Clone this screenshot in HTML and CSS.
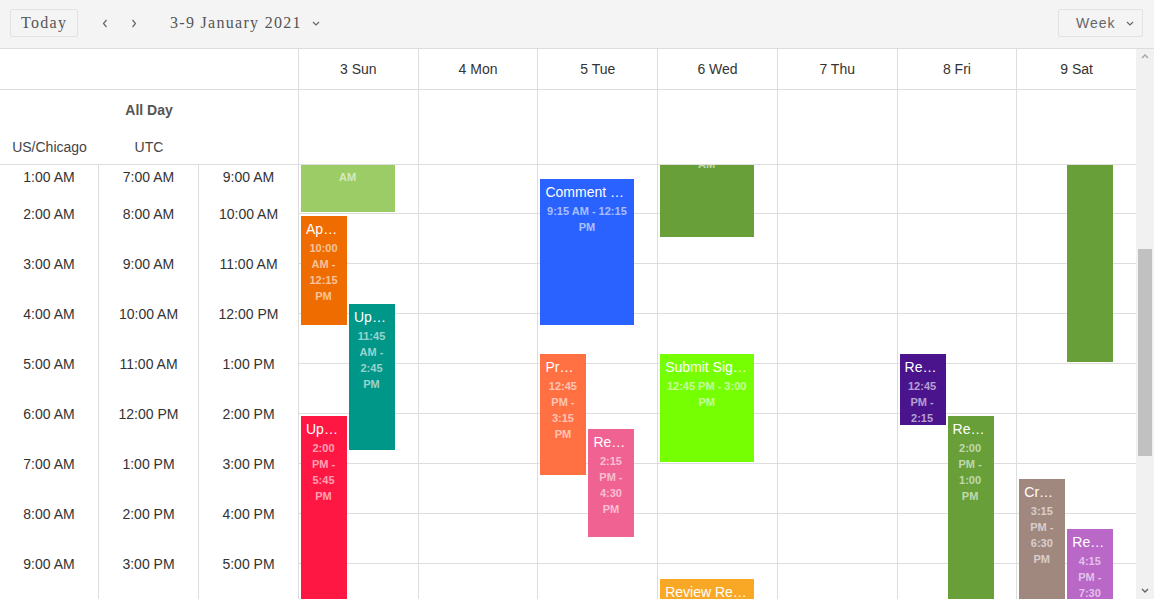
FILE: index.html
```html
<!DOCTYPE html>
<html lang="en">
<head>
  <meta charset="UTF-8" />
  <title>Scheduler - Week</title>
  <link rel="stylesheet" href="styles.css">
</head>
<body>
  <div class="toolbar">
    <button class="btn today">Today</button>
    <button class="nav prev"><svg width="6" height="9" viewBox="0 0 6 9"><polyline points="4.5,1 1.5,4.5 4.5,8" /></svg></button>
    <button class="nav next"><svg width="6" height="9" viewBox="0 0 6 9"><polyline points="1.5,1 4.5,4.5 1.5,8" /></svg></button>
    <div class="range">3-9 January 2021 <svg width="8" height="5" viewBox="0 0 8 5"><polyline points="1,1 4,4 7,1" /></svg></div>
    <div class="spacer"></div>
    <button class="btn view">Week <svg width="8" height="5" viewBox="0 0 8 5"><polyline points="1,1 4,4 7,1" /></svg></button>
  </div>

  <div class="main">
    <div class="calendar">
      <div class="row head">
        <div class="corner"></div>
        <div class="day">3 Sun</div>
        <div class="day">4 Mon</div>
        <div class="day">5 Tue</div>
        <div class="day">6 Wed</div>
        <div class="day">7 Thu</div>
        <div class="day">8 Fri</div>
        <div class="day">9 Sat</div>
      </div>

      <div class="row allday">
        <div class="corner">
          <div class="allday-label">All Day</div>
          <div class="zones">
            <div>US/Chicago</div>
            <div>UTC</div>
            <div></div>
          </div>
        </div>
        <div class="day"></div>
        <div class="day"></div>
        <div class="day"></div>
        <div class="day"></div>
        <div class="day"></div>
        <div class="day"></div>
        <div class="day"></div>
      </div>

      <div class="row body">
        <div class="gutter">
          <div class="tz">
            <div>1:00 AM</div><div>2:00 AM</div><div>3:00 AM</div><div>4:00 AM</div><div>5:00 AM</div>
            <div>6:00 AM</div><div>7:00 AM</div><div>8:00 AM</div><div>9:00 AM</div>
          </div>
          <div class="tz">
            <div>7:00 AM</div><div>8:00 AM</div><div>9:00 AM</div><div>10:00 AM</div><div>11:00 AM</div>
            <div>12:00 PM</div><div>1:00 PM</div><div>2:00 PM</div><div>3:00 PM</div>
          </div>
          <div class="tz">
            <div>9:00 AM</div><div>10:00 AM</div><div>11:00 AM</div><div>12:00 PM</div><div>1:00 PM</div>
            <div>2:00 PM</div><div>3:00 PM</div><div>4:00 PM</div><div>5:00 PM</div>
          </div>
        </div>

        <!-- Sun -->
        <div class="day">
          <div class="event full" style="top:-36.5px;height:83.5px;background:#9ccc65">
            <div class="title">Morning Standup</div>
            <div class="time">8:15 AM - 10:00 AM</div>
          </div>
          <div class="event left" style="top:51px;height:108.5px;background:#ef6c00">
            <div class="title">Approve Budget</div>
            <div class="time">10:00 AM - 12:15 PM</div>
          </div>
          <div class="event right" style="top:138.5px;height:146px;background:#009688">
            <div class="title">Update Roadmap</div>
            <div class="time">11:45 AM - 2:45 PM</div>
          </div>
          <div class="event left" style="top:251px;height:183.5px;background:#ff1744">
            <div class="title">Update Docs</div>
            <div class="time">2:00 PM - 5:45 PM</div>
          </div>
        </div>

        <!-- Mon -->
        <div class="day"></div>

        <!-- Tue -->
        <div class="day">
          <div class="event full" style="top:13.5px;height:146px;background:#2962ff">
            <div class="title">Comment on Proposal</div>
            <div class="time">9:15 AM - 12:15 PM</div>
          </div>
          <div class="event left" style="top:188.5px;height:121px;background:#ff7043">
            <div class="title">Prepare Slides</div>
            <div class="time">12:45 PM - 3:15 PM</div>
          </div>
          <div class="event right" style="top:263.5px;height:108.5px;background:#f06292">
            <div class="title">Review Contract</div>
            <div class="time">2:15 PM - 4:30 PM</div>
          </div>
        </div>

        <!-- Wed -->
        <div class="day">
          <div class="event full" style="top:-49px;height:121px;background:#689f38">
            <div class="title">Team Sync</div>
            <div class="time">8:00 AM - 10:30 AM</div>
          </div>
          <div class="event full" style="top:188.5px;height:108.5px;background:#76ff03">
            <div class="title">Submit Signatures</div>
            <div class="time">12:45 PM - 3:00 PM</div>
          </div>
          <div class="event full" style="top:414px;height:84.5px;background:#f9a825">
            <div class="title">Review Requests</div>
            <div class="time">5:15 PM - 7:00 PM</div>
          </div>
        </div>

        <!-- Thu -->
        <div class="day"></div>

        <!-- Fri -->
        <div class="day">
          <div class="event left" style="top:188.5px;height:71px;background:#4a148c">
            <div class="title">Review Budget</div>
            <div class="time">12:45 PM - 2:15 PM</div>
          </div>
          <div class="event right" style="top:251px;height:200px;background:#689f38">
            <div class="title">Release Notes</div>
            <div class="time">2:00 PM - 1:00 PM</div>
          </div>
        </div>

        <!-- Sat -->
        <div class="day">
          <div class="event right" style="top:-99px;height:296px;background:#689f38">
            <div class="title">Workshop</div>
            <div class="time">7:00 AM - 1:00 PM</div>
          </div>
          <div class="event left" style="top:313.5px;height:158.5px;background:#a1887f">
            <div class="title">Create Report</div>
            <div class="time">3:15 PM - 6:30 PM</div>
          </div>
          <div class="event right" style="top:363.5px;height:158.5px;background:#ba68c8">
            <div class="title">Review Plan</div>
            <div class="time">4:15 PM - 7:30 PM</div>
          </div>
        </div>
      </div>
    </div>

    <div class="scrollbar">
      <div class="arrow up"><svg width="8" height="5" viewBox="0 0 8 5"><polyline points="1,4 4,1 7,4" /></svg></div>
      <div class="track"><div class="thumb"></div></div>
      <div class="arrow down"><svg width="8" height="5" viewBox="0 0 8 5"><polyline points="1,1 4,4 7,1" /></svg></div>
    </div>
  </div>
</body>
</html>
```

FILE: styles.css
```css
html, body {
  margin: 0;
  padding: 0;
}
body {
  font-family: 'Liberation Sans', Arial, sans-serif;
  font-size: 14px;
  color: #333;
  height: 100vh;
  overflow: hidden;
  background: #fff;
}

/* toolbar */
.toolbar {
  height: 48px;
  box-sizing: border-box;
  display: flex;
  align-items: flex-start;
  padding: 9px 11px 0 10px;
  background: #f4f4f4;
}
.btn {
  height: 28px;
  box-sizing: border-box;
  border: 1px solid #e2e2e2;
  border-radius: 2px;
  background: #f4f4f4;
  color: #555;
  cursor: pointer;
}
.today {
  width: 68px;
  padding: 0 0 0 10px;
  text-align: left;
  font-family: 'Liberation Serif', 'Times New Roman', serif;
  font-size: 16px;
  letter-spacing: 1.3px;
}
.nav {
  width: 29px;
  height: 28px;
  padding: 0;
  border: none;
  background: none;
  display: flex;
  align-items: center;
  justify-content: center;
  cursor: pointer;
}
.nav.prev { margin-left: 12px; }
.toolbar svg polyline {
  fill: none;
  stroke: #666;
  stroke-width: 1.2;
}
.range {
  margin-left: 22px;
  height: 28px;
  display: flex;
  align-items: center;
  gap: 10px;
  font-family: 'Liberation Serif', 'Times New Roman', serif;
  font-size: 16px;
  letter-spacing: 1.3px;
  color: #555;
}
.spacer { flex: 1; }
.view {
  width: 85px;
  padding: 0 0 0 17px;
  display: flex;
  align-items: center;
  gap: 10px;
  font-family: 'Liberation Sans', Arial, sans-serif;
  font-size: 14px;
  letter-spacing: 1px;
  color: #666;
}

/* calendar */
.main {
  display: flex;
  height: calc(100vh - 48px);
  box-sizing: border-box;
  border-top: 1px solid #ddd;
}
.calendar {
  flex: 1;
  min-width: 0;
  display: flex;
  flex-direction: column;
}
.row {
  display: grid;
  grid-template-columns: 298px repeat(7, 1fr);
}
.day {
  border-left: 1px solid #ddd;
  min-width: 0;
}
.head {
  height: 41px;
  box-sizing: border-box;
  border-bottom: 1px solid #ddd;
}
.head .day {
  display: flex;
  align-items: center;
  justify-content: center;
}
.allday {
  height: 75px;
  box-sizing: border-box;
  border-bottom: 1px solid #ddd;
}
.allday-label {
  padding-top: 10px;
  line-height: 20px;
  text-align: center;
  font-weight: bold;
  color: #555;
}
.zones {
  display: grid;
  grid-template-columns: 99px 100px 99px;
  margin-top: 19px;
  line-height: 16px;
  color: #444;
  text-align: center;
}

.body {
  flex: 1;
  overflow: hidden;
}
.gutter {
  display: grid;
  grid-template-columns: 99px 100px 99px;
}
.tz {
  border-right: 1px solid #ddd;
  text-align: center;
  line-height: 16px;
}
.tz:last-child { border-right: none; }
.tz div {
  height: 50px;
}
.tz div:first-child {
  height: 41px;
  padding-top: 4px;
  box-sizing: border-box;
}
.body .day {
  position: relative;
  background: linear-gradient(to bottom, #ddd 1px, transparent 1px) 0 48px / 100% 50px;
}

/* events */
.event {
  position: absolute;
  box-sizing: border-box;
  padding: 3px 6px 0 5px;
  overflow: hidden;
  color: #fff;
}
.event.full { left: 2px; width: 94px; }
.event.left { left: 2px; width: 46px; }
.event.right { left: 50px; width: 46px; }
.event .title {
  font-size: 14px;
  line-height: 20px;
  white-space: nowrap;
  overflow: hidden;
  text-overflow: ellipsis;
}
.event .time {
  font-size: 11px;
  font-weight: bold;
  line-height: 16px;
  padding-top: 1px;
  text-align: center;
  color: rgba(255, 255, 255, 0.6);
}

/* scrollbar */
.scrollbar {
  width: 18px;
  background: #f1f1f1;
  display: flex;
  flex-direction: column;
}
.arrow {
  display: flex;
  align-items: center;
  justify-content: center;
}
.arrow.up { height: 14px; }
.arrow.down { height: 17px; }
.arrow polyline {
  fill: none;
  stroke-width: 1.3;
}
.arrow.up polyline { stroke: #a3a3a3; }
.arrow.down polyline { stroke: #606060; }
.track { flex: 1; }
.thumb {
  width: 14px;
  height: 207px;
  margin: 186px 2px 0;
  background: #c1c1c1;
}
```
